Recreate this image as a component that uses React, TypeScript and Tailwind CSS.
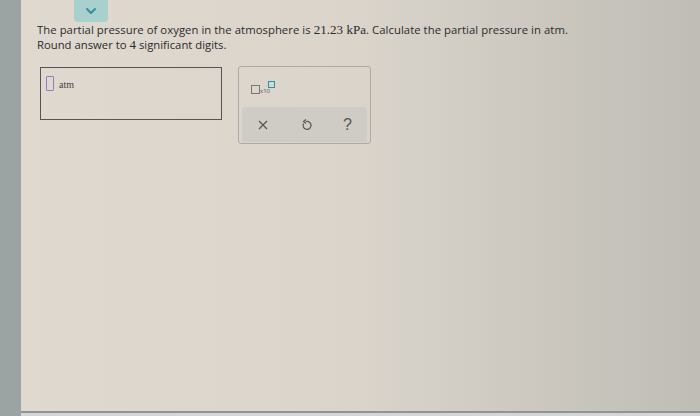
import React from "react";

export default function App() {
  return (
    <div className="w-[700px] h-[416px] flex overflow-hidden bg-[#c9c6be]" style={{ fontFamily: '"Open Sans", "Liberation Sans", sans-serif' }}>
      <div className="w-[21px] h-full bg-[#9ba4a3] shrink-0" />
      <div className="flex-1 flex flex-col">
        <div className="flex-1 relative bg-gradient-to-r from-[#e0d9d0] via-[#dad4cb] to-[#bfbdb6]">
          <div className="absolute left-[53px] top-0 w-[34px] h-[22px] rounded-b-[4px] bg-[#a8d0cd] flex items-center justify-center">
            <svg width="12" height="8" viewBox="0 0 12 8"><path d="M2 2 L6 6 L10 2" fill="none" stroke="#3b8c98" strokeWidth="2" strokeLinecap="round" strokeLinejoin="round" /></svg>
          </div>
          <div className="pt-[22px] pl-[16px] text-[11.3px] leading-[15px] text-[#2b2b2b]">
            <div className="tracking-[0.05px]">
              The partial pressure of oxygen in the atmosphere is{" "}
              <span className="text-[13px]" style={{ fontFamily: '"Liberation Serif", serif' }}>21.23 kPa</span>. Calculate the partial pressure in atm.
            </div>
            <div>
              Round answer to <span className="text-[13px]" style={{ fontFamily: '"Liberation Serif", serif' }}>4</span> significant digits.
            </div>
          </div>
          <div className="flex items-start pl-[19px] mt-[15px] gap-[16px]">
            <div className="w-[182px] h-[53px] border border-[#555] flex items-start pt-[8px] pl-[5px] gap-[5px]">
              <div className="w-[8px] h-[15px] border-[1.5px] border-[#8b7fc6] rounded-[1px]" />
              <span className="text-[10px] text-[#444] leading-[12px] mt-[3px]" style={{ fontFamily: '"Liberation Serif", serif' }}>atm</span>
            </div>
            <div className="w-[133px] h-[78px] -mt-[1px] border border-[#aaa] rounded-[3px] flex flex-col px-[3px] pb-[1px]">
              <div className="h-[40px] relative">
                <div className="absolute left-[9px] top-[18px] w-[9px] h-[9px] border border-[#777]" />
                <span className="absolute left-[18px] top-[21px] text-[6px] text-[#555] leading-none">x10</span>
                <div className="absolute left-[26px] top-[14px] w-[7px] h-[7px] border border-[#3c8d97] bg-[#bfe0de]" />
              </div>
              <div className="flex-1 bg-[#cfccc6] rounded-[2px] flex items-center justify-between px-[15px]">
                <svg width="12" height="12" viewBox="0 0 12 12"><path d="M2 2 L10 10 M10 2 L2 10" stroke="#555" strokeWidth="1.2" /></svg>
                <svg width="12" height="13" viewBox="0 0 12 13"><path d="M3.5 5.5 A4 4 0 1 0 6 3.5" fill="none" stroke="#555" strokeWidth="1.2" /><path d="M6 1.5 L3.5 3.5 L6 5.5" fill="none" stroke="#555" strokeWidth="1.2" /></svg>
                <span className="text-[16px] text-[#555] leading-none" style={{ fontFamily: '"Liberation Sans", sans-serif' }}>?</span>
              </div>
            </div>
          </div>
        </div>
        <div className="h-[2px] bg-[#8f9594]" />
        <div className="h-[3px] bg-[#d3d6d4]" />
      </div>
    </div>
  );
}
